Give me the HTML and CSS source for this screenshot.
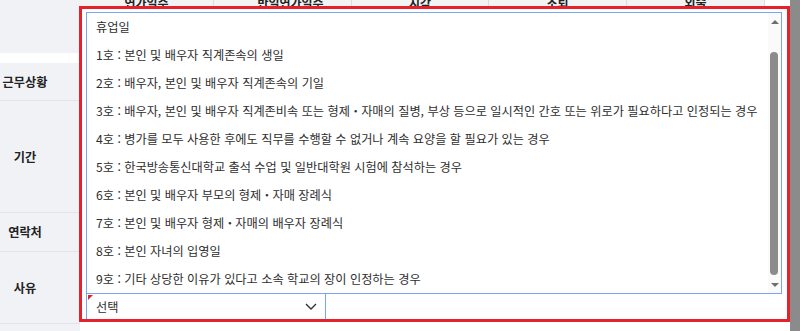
FILE: index.html
```html
<!DOCTYPE html>
<html lang="ko">
<head>
<meta charset="utf-8">
<title>근무상황</title>
<link rel="stylesheet" href="styles.css">
</head>
<body>
<div class="page">
  <div class="labels">
    <div class="corner"></div>
    <div class="spacer"></div>
    <div class="lrow r1">근무상황</div>
    <div class="lrow r2">기간</div>
    <div class="lrow r3">연락처</div>
    <div class="lrow r4">사유</div>
    <div class="lrow r5"></div>
  </div>
  <div class="main">
    <div class="thead">
      <div class="th c1">연가일수</div>
      <div class="th c2 shift">반일연가일수</div>
      <div class="th c3">지각</div>
      <div class="th c4">조퇴</div>
      <div class="th c5">외출</div>
    </div>
  </div>
  <div class="pagebar"></div>

  <div class="dropdown">
    <div class="listbox">
      <ul class="options">
        <li>휴업일</li>
        <li>1호 : 본인 및 배우자 직계존속의 생일</li>
        <li>2호 : 배우자, 본인 및 배우자 직계존속의 기일</li>
        <li>3호 : 배우자, 본인 및 배우자 직계존비속 또는 형제<span class="dot">ㆍ</span>자매의 질병, 부상 등으로 일시적인 간호 또는 위로가 필요하다고 인정되는 경우</li>
        <li>4호 : 병가를 모두 사용한 후에도 직무를 수행할 수 없거나 계속 요양을 할 필요가 있는 경우</li>
        <li>5호 : 한국방송통신대학교 출석 수업 및 일반대학원 시험에 참석하는 경우</li>
        <li>6호 : 본인 및 배우자 부모의 형제<span class="dot">ㆍ</span>자매 장례식</li>
        <li>7호 : 본인 및 배우자 형제<span class="dot">ㆍ</span>자매의 배우자 장례식</li>
        <li>8호 : 본인 자녀의 입영일</li>
        <li>9호 : 기타 상당한 이유가 있다고 소속 학교의 장이 인정하는 경우</li>
      </ul>
      <div class="vscroll">
        <div class="sbtn"><span class="tri-up"></span></div>
        <div class="track"><div class="thumb"></div></div>
        <div class="sbtn"><span class="tri-down"></span></div>
      </div>
    </div>
    <div class="selrow">
      <div class="select">
        <span class="req"></span>
        <span class="seltext">선택</span>
        <svg class="chev" width="12" height="7" viewBox="0 0 12 7"><path d="M1 1 L6 6 L11 1" fill="none" stroke="#333" stroke-width="1.4"/></svg>
      </div>
    </div>
  </div>
</div>
</body>
</html>
```

FILE: styles.css
```css
html, body {
  margin: 0;
  padding: 0;
  background: #fff;
}
body {
  font-family: "Noto Sans CJK KR", "Noto Sans", sans-serif;
  color: #333;
}
.page {
  position: relative;
  width: 800px;
  height: 331px;
  overflow: hidden;
  display: flex;
  background: #fff;
}
.labels {
  width: 80px;
  flex: none;
  display: flex;
  flex-direction: column;
}
.corner {
  height: 53px;
  background: #f0f2f6;
  flex: none;
}
.spacer {
  height: 10px;
  flex: none;
}
.lrow {
  flex: none;
  box-sizing: border-box;
  background: #f0f2f6;
  border-bottom: 1px solid #e1e4ea;
  display: flex;
  align-items: center;
  justify-content: center;
  padding-right: 30px;
  font-size: 12.2px;
  font-weight: 700;
  color: #222;
}
.r1 { height: 38px; }
.r2 { height: 112px; }
.r3 { height: 39px; }
.r4 { height: 72px; }
.r5 { flex: 1; border-bottom: none; }

.main {
  flex: 1;
}
.thead {
  display: flex;
  margin-top: -12px;
  height: 28px;
  width: 685px;
  background: #f3f3f3;
}
.th {
  box-sizing: border-box;
  display: flex;
  align-items: center;
  justify-content: center;
  border-right: 1px solid #dcdcdc;
  font-size: 12px;
  font-weight: 700;
  color: #222;
}
.c1 { width: 134px; }
.c2 { width: 138px; }
.c3 { width: 137px; }
.c4 { width: 138px; }
.c5 { width: 138px; }
.shift { padding-left: 16px; }

.pagebar {
  width: 10px;
  flex: none;
  background: #8b8b8b;
}

.dropdown {
  position: absolute;
  left: 79px;
  top: 6px;
  width: 711px;
  height: 316px;
  box-sizing: border-box;
  border: 3px solid #e5222b;
  padding: 3px 5px 0 4px;
  background: #fff;
  display: flex;
  flex-direction: column;
}
.listbox {
  height: 282px;
  box-sizing: border-box;
  border: 1px solid #78a4f2;
  display: flex;
  flex: none;
}
.options {
  flex: 1;
  list-style: none;
  margin: 0;
  padding: 0 0 0 9px;
  overflow: hidden;
}
.options li {
  height: 28px;
  line-height: 28px;
  font-size: 12.2px;
  color: #2e2e2e;
  white-space: nowrap;
}
.dot {
  font-weight: 900;
}
.vscroll {
  width: 13px;
  flex: none;
  display: flex;
  flex-direction: column;
  background: #fafafa;
}
.sbtn {
  height: 17px;
  flex: none;
  display: flex;
  align-items: center;
  justify-content: center;
}
.tri-up {
  width: 0;
  height: 0;
  border-left: 4px solid transparent;
  border-right: 4px solid transparent;
  border-bottom: 4px solid #6e6e6e;
}
.tri-down {
  width: 0;
  height: 0;
  border-left: 4px solid transparent;
  border-right: 4px solid transparent;
  border-top: 4px solid #6e6e6e;
}
.track {
  flex: 1;
  display: flex;
  flex-direction: column;
}
.thumb {
  margin: 22px 3px 0 2px;
  height: 223px;
  border-radius: 4px;
  background: #8c8c8c;
}
.selrow {
  flex: 1;
  display: flex;
}
.select {
  position: relative;
  width: 240px;
  box-sizing: border-box;
  border-left: 1px solid #78a4f2;
  border-right: 1px solid #78a4f2;
  display: flex;
  align-items: center;
  justify-content: space-between;
  padding: 0 8px 0 9px;
  font-size: 12.2px;
  color: #2e2e2e;
}
.req {
  position: absolute;
  left: 1px;
  top: 1px;
  width: 0;
  height: 0;
  border-top: 5px solid #e5222b;
  border-right: 5px solid transparent;
}
.chev {
  display: block;
}
```
